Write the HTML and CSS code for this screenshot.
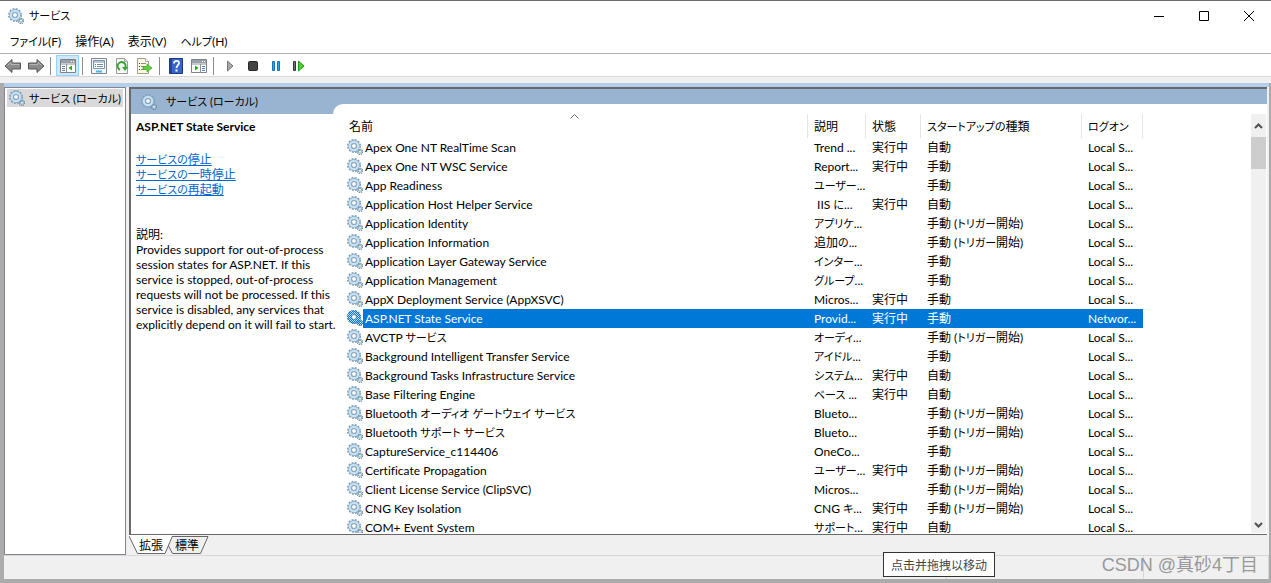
FILE: index.html
```html
<!DOCTYPE html>
<html lang="ja">
<head>
<meta charset="utf-8">
<title>サービス</title>
<link rel="stylesheet" href="styles.css">
</head>
<body>
<svg class="defs" aria-hidden="true">
  <pattern id="dither" width="2" height="2" patternUnits="userSpaceOnUse"><path d="M0 0h1v1H0zM1 1h1v1H1z" fill="#0078d7"/></pattern>
  <symbol id="gear" viewBox="0 0 16 16">
    <circle cx="13" cy="12.8" r="2.6" fill="none" stroke="#6f8ea5" stroke-width="1.4" stroke-dasharray="1.2 .84"/>
    <circle cx="13" cy="12.8" r="1.5" fill="#f5fafd" stroke="#8fb0c6" stroke-width="1.1"/>
    <circle cx="7" cy="7" r="6.2" fill="none" stroke="#7f9db3" stroke-width="1.6" stroke-dasharray="1.9 1.346"/>
    <circle cx="7" cy="7" r="4.2" fill="none" stroke="#86abc6" stroke-width="3.4"/>
    <circle cx="7" cy="7" r="4.2" fill="none" stroke="#c6e2f4" stroke-width="2.2"/>
    <circle cx="7" cy="7" r="2.4" fill="#fff" stroke="#6d8ca4" stroke-width=".8"/>
  </symbol>
  <symbol id="gear-selected" viewBox="0 0 16 16">
    <use href="#gear"/>
    <circle cx="7" cy="7" r="4.7" fill="none" stroke="url(#dither)" stroke-width="4.600"/>
    <circle cx="13" cy="12.800" r="2.800" fill="url(#dither)"/>
  </symbol>
</svg>
<div class="window">
  <header class="titlebar">
    <svg class="gear"><use href="#gear"/></svg>
    <h1 class="title kana">サービス</h1>
    <div class="controls">
      <button aria-label="最小化"><svg width="12" height="12" viewBox="0 0 12 12"><path d="M1 6.5h10" stroke="#000"/></svg></button>
      <button aria-label="最大化"><svg width="12" height="12" viewBox="0 0 12 12"><path d="M1.5 1.5h9v9h-9z" fill="none" stroke="#000"/></svg></button>
      <button aria-label="閉じる"><svg width="12" height="12" viewBox="0 0 12 12"><path d="M1 1l10 10M11 1L1 11" stroke="#000"/></svg></button>
    </div>
  </header>
  <nav class="menu">
    <button><span class="kana">ファイル</span>(F)</button><button>操作(A)</button><button>表示(V)</button><button><span class="kana">ヘルプ</span>(H)</button>
  </nav>
  <div class="toolbar">
    <button aria-label="戻る"><svg width="18" height="16" viewBox="0 0 18 16"><path d="M1 8L8 1.500v3.500h8.500v6H8V14.500z" fill="#8b8b8b" stroke="#555"/><path d="M3.500 7.500L7 4.500v2h8.500" fill="none" stroke="#b5b5b5"/></svg></button>
    <button aria-label="進む"><svg width="18" height="16" viewBox="0 0 18 16"><path d="M17 8L10 1.500v3.500H1.500v6H10V14.500z" fill="#8b8b8b" stroke="#555"/><path d="M2.500 6.500h8.500v-2l3.500 3" fill="none" stroke="#b5b5b5"/></svg></button>
    <i class="sep"></i>
    <button class="on" aria-label="コンソール ツリーの表示"><svg width="16" height="16" viewBox="0 0 16 16"><path d="M.5 1.500h15v13H.5z" fill="#fff" stroke="#7d8289"/><path d="M1 2h14v3H1z" fill="#9ba1a8"/><path d="M11 3.500h1M13 3.500h1" stroke="#fff"/><path d="M2 8.500h3M2 10.500h3M2 12.500h3" stroke="#68798b"/><path d="M6.500 6v9M1 6h14" stroke="#8b9198"/><path d="M12 7.500v5L8.500 10z" fill="#2fa616"/></svg></button>
    <i class="sep"></i>
    <button aria-label="プロパティ"><svg width="16" height="16" viewBox="0 0 16 16"><path d="M.5.5h15v15H.5z" fill="#f4f6f8" stroke="#81868c"/><path d="M2.500 2.500h11v8h-11z" fill="#fff" stroke="#7d93a8"/><path d="M3 4h10M6 6.500h6M6 8.500h6" stroke="#718ca6"/><path d="M4 6.500h1M4 8.500h1" stroke="#218bd0"/><path d="M5 13.500h6" stroke="#4fb4e6" stroke-width="2"/></svg></button>
    <button aria-label="最新の情報に更新"><svg width="16" height="16" viewBox="0 0 16 16"><path d="M2.500.5h8l3 3v12h-11z" fill="#fafafa" stroke="#999"/><path d="M10.500.5v3h3" fill="#ddd" stroke="#aaa"/><path d="M6 11.800A4 4 0 1 1 11.500 9" fill="none" stroke="#31a52f" stroke-width="2"/><path d="M8 9h6l-3 4z" fill="#31a52f"/></svg></button>
    <button aria-label="一覧のエクスポート"><svg width="17" height="16" viewBox="0 0 17 16"><path d="M1.500.5h8l3 3v12h-11z" fill="#fdf7dc" stroke="#a39f8f"/><path d="M9.500.5v3h3" fill="#fff" stroke="#aaa"/><path d="M3 5.500h1M3 8.500h1M3 11.500h1" stroke="#333"/><path d="M5 5.500h5M5 8.500h4M5 11.500h5" stroke="#8987a0"/><path d="M7 8.500h4V6l5 4-5 4v-2.500H7z" fill="#62cf3f" stroke="#42a82d" stroke-width=".7"/></svg></button>
    <i class="sep"></i>
    <button aria-label="ヘルプ"><svg width="14" height="16" viewBox="0 0 14 16"><path d="M.5.5h13v15H.5z" fill="#3565cd" stroke="#20377d"/><path d="M1 1h2v14H1z" fill="#244794"/><path d="M5 5.500c0-3.500 5-3.500 5-.5 0 2-2.500 2.200-2.500 5" fill="none" stroke="#fff" stroke-width="1.800"/><path d="M6.500 11.500h2v2h-2z" fill="#fff"/></svg></button>
    <button aria-label="操作ウィンドウの表示"><svg width="16" height="16" viewBox="0 0 16 16"><path d="M.5 1.500h15v13H.5z" fill="#fff" stroke="#7d8289"/><path d="M1 2h14v3H1z" fill="#9ba1a8"/><path d="M11 3.500h1M13 3.500h1" stroke="#fff"/><path d="M11 8.500h3M11 10.500h3M11 12.500h3" stroke="#5682b5"/><path d="M9.500 6v9M1 6h14" stroke="#8b9198"/><path d="M4 7.500v5L7.500 10z" fill="#2fa616"/></svg></button>
    <i class="sep"></i>
    <button aria-label="開始"><svg width="12" height="12" viewBox="0 0 12 12"><path d="M3.500 1v10L9 6z" fill="#a9a9a9" stroke="#777"/></svg></button>
    <button aria-label="停止"><svg width="12" height="12" viewBox="0 0 12 12"><rect x="1.500" y="1.500" width="9" height="9" rx="1" fill="#444" stroke="#272727"/></svg></button>
    <button aria-label="一時停止"><svg width="12" height="12" viewBox="0 0 12 12"><path d="M2.500 1.500h2v9h-2zM7.500 1.500h2v9h-2z" fill="#24a5ed" stroke="#1475b6"/></svg></button>
    <button aria-label="再起動"><svg width="12" height="12" viewBox="0 0 12 12"><path d="M.5 1.500h2v9h-2z" fill="#777" stroke="#333"/><path d="M5.500 1v10L11 6z" fill="#4dd126" stroke="#1e9d17"/></svg></button>
  </div>
  <div class="frame">
    <div class="panes">
      <aside class="tree"><button class="node kana"><svg class="gear"><use href="#gear"/></svg><span>サービス (ローカル)</span></button></aside>
      <main class="main">
        <div class="view">
          <section class="detail">
            <h2 class="banner kana"><svg class="gear"><use href="#gear"/></svg>サービス (ローカル)</h2>
            <div class="info">
              <h3 class="name">ASP.NET State Service</h3>
              <div class="links"><a href="#stop"><span class="kana">サービスの</span>停止</a><a href="#pause"><span class="kana">サービスの</span>一時停止</a><a href="#restart"><span class="kana">サービスの</span>再起動</a></div>
              <p>説明:</p>
              <p>Provides support for out-of-process session states for ASP.NET. If this service is stopped, out-of-process requests will not be processed. If this service is disabled, any services that explicitly depend on it will fail to start.</p>
            </div>
          </section>
          <section class="listpane">
            <div class="list">
              <div class="rows">
                <table>
                  <colgroup><col class="c1"><col class="c2"><col class="c3"><col class="c4"><col class="c5"></colgroup>
                  <thead><tr><th>名前<svg class="caret" width="9" height="5" viewBox="0 0 9 5"><path d="M.5 4.500l4-4 4 4" fill="none" stroke="#666"/></svg></th><th>説明</th><th>状態</th><th><span class="kana">スタートアップの</span>種類</th><th><span class="kana">ログオン</span></th></tr></thead>
                  <tbody id="services"></tbody>
                </table>
              </div>
              <div class="scroll"><button aria-label="上へ"><svg width="9" height="6" viewBox="0 0 9 6"><path d="M1 5l3.500-3.500L8 5" fill="none" stroke="#505050" stroke-width="2"/></svg></button><div class="thumb"></div><button class="down" aria-label="下へ"><svg width="9" height="6" viewBox="0 0 9 6"><path d="M1 1l3.500 3.500L8 1" fill="none" stroke="#505050" stroke-width="2"/></svg></button></div>
            </div>
          </section>
        </div>
        <div class="tabs">
          <svg class="tabshape" width="80" height="20" viewBox="0 0 80 20"><path d="M39 1.500h40L71.500 18.500h-28L39.500 11z" fill="#f0f0f0" stroke="#666"/><path d="M0 0L8.500 18.500h27.500L43.500 1V0z" fill="#fff"/><path d="M0 1l8.500 17.500h27.500L43.500 1" fill="none" stroke="#666"/></svg>
          <button>拡張</button><button>標準</button>
        </div>
      </main>
    </div>
    <footer class="status"><span></span><span></span><span></span></footer>
  </div>
  <div class="tooltip" role="tooltip" lang="zh-CN">点击并拖拽以移动</div>
  <div class="mark" lang="zh-CN">CSDN @真砂4丁目</div>
</div>
<script src="services.js"></script>
</body>
</html>
```

FILE: services.js
```js
const RUN = "実行中", AUTO = "自動", MAN = "手動", TRIG = "手動 (トリガー開始)";
const services = [
  ["Apex One NT RealTime Scan", "Trend ...", RUN, AUTO],
  ["Apex One NT WSC Service", "Report...", RUN, MAN],
  ["App Readiness", "ユーザー...", "", MAN],
  ["Application Host Helper Service", "\u00a0IIS に...", RUN, AUTO],
  ["Application Identity", "アプリケ...", "", TRIG],
  ["Application Information", "追加の...", "", TRIG],
  ["Application Layer Gateway Service", "インター...", "", MAN],
  ["Application Management", "グループ...", "", MAN],
  ["AppX Deployment Service (AppXSVC)", "Micros...", RUN, MAN],
  ["ASP.NET State Service", "Provid...", RUN, MAN, "Networ..."],
  ["AVCTP サービス", "オーディ...", "", TRIG],
  ["Background Intelligent Transfer Service", "アイドル...", "", MAN],
  ["Background Tasks Infrastructure Service", "システム...", RUN, AUTO],
  ["Base Filtering Engine", "ベース ...", RUN, AUTO],
  ["Bluetooth オーディオ ゲートウェイ サービス", "Blueto...", "", TRIG],
  ["Bluetooth サポート サービス", "Blueto...", "", TRIG],
  ["CaptureService_c114406", "OneCo...", "", MAN],
  ["Certificate Propagation", "ユーザー...", RUN, TRIG],
  ["Client License Service (ClipSVC)", "Micros...", "", TRIG],
  ["CNG Key Isolation", "CNG キ...", RUN, TRIG],
  ["COM+ Event System", "サポート...", RUN, AUTO]
];
const kana = text => text.replace(/[ぁ-んァ-ヶー]+/g, '<span class="kana">$&</span>');
document.getElementById("services").innerHTML = services.map(([name, desc, state, start, logon]) => {
  const selected = name === "ASP.NET State Service";
  return `<tr${selected ? ' class="selected"' : ""}><td class="first"><div class="cell"><svg class="gear"><use href="#gear${selected ? "-selected" : ""}"/></svg><span class="label">${kana(name)}</span></div></td><td>${kana(desc)}</td><td>${state}</td><td>${kana(start)}</td><td>${logon || "Local S..."}</td></tr>`;
}).join("");
```

FILE: styles.css
```css
* { box-sizing: border-box; }
body { margin: 0; font: 12px/15px Lato, "Noto Sans CJK JP", sans-serif; font-feature-settings: "palt"; font-variant-ligatures: none; color: #000; }
button { font: inherit; font-feature-settings: inherit; color: inherit; border: 0; padding: 0; margin: 0; background: none; }
h1, h2, h3, p { margin: 0; font-size: inherit; font-weight: normal; }
.kana, h1.kana, h2.kana { font-size: 11px; }
.defs { position: absolute; width: 0; height: 0; }
.gear { width: 16px; height: 16px; flex: none; }
.window { position: relative; height: 100vh; display: flex; flex-direction: column; border-top: 1px solid #6b6b6b; overflow: hidden; background: #f0f0f0; }
.titlebar, .menu, .toolbar { background: #fff; }
.titlebar { display: flex; align-items: center; height: 29px; padding-left: 8px; gap: 5px; flex: none; }
.controls { margin-left: auto; display: flex; }
.controls button { width: 45px; height: 28px; display: grid; place-items: center; }
.menu { display: flex; align-items: center; gap: 14px; height: 23px; padding-left: 10px; flex: none; }
.toolbar { display: flex; align-items: center; height: 24px; border-top: 1px solid #abaeb8; border-bottom: 1px solid #d9d9d9; padding: 1px 0 0 1px; flex: none; }
.toolbar button { width: 23px; height: 21px; display: grid; place-items: center; }
.toolbar .on { background: #cce8ff; border: 1px solid #99d1ff; }
.sep { width: 1px; height: 18px; background: #8d8d8d; margin: 0 4px 0 3px; }
.sep:first-of-type { margin-right: 5px; }
.frame { flex: 1; min-height: 0; display: flex; flex-direction: column; margin-top: 6px; border: solid #ababab; border-width: 0 2px 4px 4px; }
.panes { flex: 1; min-height: 0; display: flex; gap: 3px; border-top: 4px solid #b4cfea; padding-right: 2px; }
.tree { width: 122px; border: 1px solid #828790; background: #fff; padding: 1px 2px; }
.node { display: flex; align-items: center; gap: 4px; height: 18px; padding: 0 2px; background: #d9d9d9; white-space: nowrap; }
.main { flex: 1; min-width: 0; display: flex; flex-direction: column; }
.view { flex: 1; min-height: 0; display: flex; background: #fff; border: solid #696969; border-width: 2px 0 1px 2px; }
.detail { position: relative; z-index: 1; width: 202px; flex: none; }
.banner { display: flex; align-items: center; gap: 9px; height: 25px; padding-left: 10px; background: #99b4d1; }
.info { width: 208px; padding: 5px 0 0 5px; }
.name { font-weight: 700; }
.links { display: flex; flex-direction: column; align-items: flex-start; margin: 18px 0 30px; }
.links a { height: 15px; color: #0066cc; text-decoration: underline; }
.listpane { flex: 1; min-width: 0; background: #99b4d1; padding-top: 15px; display: flex; }
.list { flex: 1; min-width: 0; display: flex; background: #fff; border-top-left-radius: 10px; padding: 10px 1px 1px 10px; }
.rows { flex: 1; min-width: 0; overflow: hidden; }
table { width: 800px; table-layout: fixed; border-collapse: separate; border-spacing: 0; }
.c1 { width: 465px; } .c2 { width: 58px; } .c3 { width: 55px; } .c4 { width: 161px; } .c5 { width: 61px; }
th { position: relative; height: 24px; padding: 0 6px; text-align: left; font-weight: normal; white-space: nowrap; border-right: 1px solid #e5e5e5; }
.caret { position: absolute; left: 49%; top: 0; }
td { height: 19px; padding: 0 0 0 6px; white-space: nowrap; }
td.first { padding-left: 4px; }
.cell { display: flex; height: 19px; line-height: 19px; }
.cell .gear { margin-top: 1px; }
.label { flex: 1; padding-left: 2px; }
.selected { color: #fff; }
.selected td:not(.first), .selected .label { background: #0078d7; }
.scroll { width: 15px; display: flex; flex-direction: column; background: #f0f0f0; }
.scroll button { height: 23px; display: grid; place-items: center; }
.thumb { height: 32px; background: #cdcdcd; }
.scroll .down { margin-top: auto; height: 17px; }
.tabs { position: relative; height: 20px; flex: none; display: flex; gap: 12px; padding: 1px 0 0 10px; }
.tabs button { position: relative; height: 18px; }
.tabshape { position: absolute; left: 0; top: 0; }
.status { height: 24px; flex: none; border-top: 1px solid #d7d7d7; display: flex; justify-content: flex-end; }
.status span { border-right: 1px solid #d7d7d7; }
.status span + span { width: 197px; }
.status span + span + span { width: 125px; }
.tooltip { position: absolute; right: 276px; bottom: 6px; width: 112px; height: 25px; border: 1px solid #333; background: #fff; text-align: center; font: 12px/23px "Noto Sans CJK SC", sans-serif; color: #444; }
.mark { position: absolute; right: 13px; bottom: 6px; font: 18px/24px "Liberation Sans", "Noto Sans CJK SC", sans-serif; font-feature-settings: normal; color: #999; white-space: nowrap; }
```
